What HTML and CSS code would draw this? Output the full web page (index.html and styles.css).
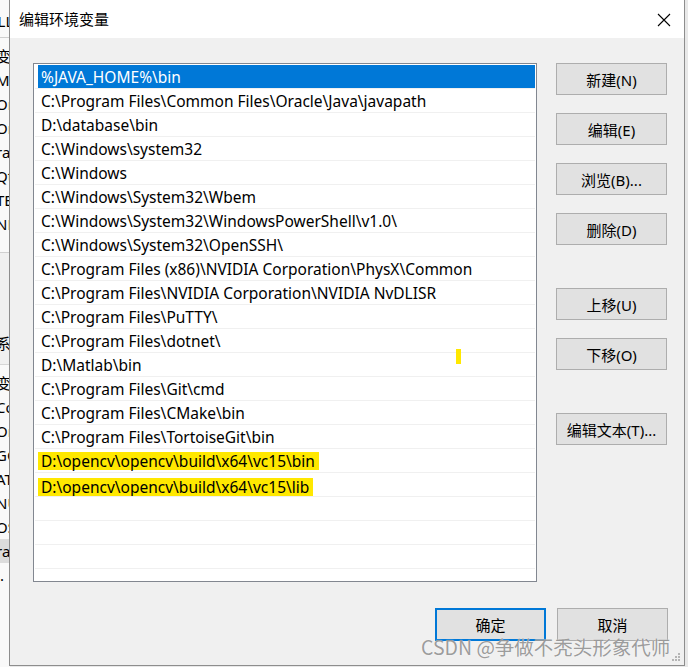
FILE: index.html
```html
<!DOCTYPE html>
<html lang="zh">
<head>
<meta charset="utf-8">
<title>编辑环境变量</title>
<link rel="stylesheet" href="styles.css">
</head>
<body>
<div class="desktop">
  <div class="bgwin">
    <div class="bg-top">
      <div class="bgl l1">ALL</div>
      <div class="bgl l2">变量</div>
      <div class="bgl">MY</div>
      <div class="bgl">Or</div>
      <div class="bgl">Or</div>
      <div class="bgl">ra</div>
      <div class="bgl">Qt</div>
      <div class="bgl">TE</div>
      <div class="bgl">NM</div>
    </div>
    <div class="bg-mid">
      <div class="bgl">系统</div>
    </div>
    <div class="bg-bot">
      <div class="bgl">变量</div>
      <div class="bgl">Co</div>
      <div class="bgl">Or</div>
      <div class="bgl">GO</div>
      <div class="bgl">AT</div>
      <div class="bgl">NU</div>
      <div class="bgl">OS</div>
      <div class="bgl sel">ra</div>
      <div class="bgl">..</div>
    </div>
  </div>

  <div class="dialog">
    <div class="titlebar">
      <span class="title">编辑环境变量</span>
      <svg class="close" width="14" height="14" viewBox="0 0 14 14"><path d="M1 1 L13 13 M13 1 L1 13" stroke="#000" stroke-width="1.1" fill="none"/></svg>
    </div>
    <div class="body">
      <div class="main">
        <div class="list">
          <div class="row"><span class="cell selected">%JAVA_HOME%\bin</span></div>
          <div class="row"><span class="cell">C:\Program Files\Common Files\Oracle\Java\javapath</span></div>
          <div class="row"><span class="cell">D:\database\bin</span></div>
          <div class="row"><span class="cell">C:\Windows\system32</span></div>
          <div class="row"><span class="cell">C:\Windows</span></div>
          <div class="row"><span class="cell">C:\Windows\System32\Wbem</span></div>
          <div class="row"><span class="cell">C:\Windows\System32\WindowsPowerShell\v1.0\</span></div>
          <div class="row"><span class="cell">C:\Windows\System32\OpenSSH\</span></div>
          <div class="row"><span class="cell">C:\Program Files (x86)\NVIDIA Corporation\PhysX\Common</span></div>
          <div class="row"><span class="cell">C:\Program Files\NVIDIA Corporation\NVIDIA NvDLISR</span></div>
          <div class="row"><span class="cell">C:\Program Files\PuTTY\</span></div>
          <div class="row"><span class="cell">C:\Program Files\dotnet\</span></div>
          <div class="row"><span class="cell">D:\Matlab\bin</span></div>
          <div class="row"><span class="cell">C:\Program Files\Git\cmd</span></div>
          <div class="row"><span class="cell">C:\Program Files\CMake\bin</span></div>
          <div class="row"><span class="cell">C:\Program Files\TortoiseGit\bin</span></div>
          <div class="row"><span class="cell"><span class="mark m1">D:\opencv\opencv\build\x64\vc15\bin</span></span></div>
          <div class="row"><span class="cell"><span class="mark m2">D:\opencv\opencv\build\x64\vc15\lib</span></span></div>
          <div class="row"><span class="cell"></span></div>
          <div class="row"><span class="cell"></span></div>
          <div class="row"><span class="cell"></span></div>
          <div class="row"><span class="cell"></span></div>
        </div>
        <div class="buttons">
          <button class="btn">新建(N)</button>
          <button class="btn">编辑(E)</button>
          <button class="btn">浏览(B)...</button>
          <button class="btn">删除(D)</button>
          <button class="btn gap">上移(U)</button>
          <button class="btn">下移(O)</button>
          <button class="btn gap">编辑文本(T)...</button>
        </div>
      </div>
      <div class="footer">
        <button class="btn default">确定</button>
        <button class="btn">取消</button>
      </div>
    </div>
    <div class="grip">
      <svg width="9" height="9" viewBox="0 0 9 9" fill="#b4b4b4">
        <rect x="6" y="0" width="2" height="2"/>
        <rect x="3" y="3" width="2" height="2"/><rect x="6" y="3" width="2" height="2"/>
        <rect x="0" y="6" width="2" height="2"/><rect x="3" y="6" width="2" height="2"/><rect x="6" y="6" width="2" height="2"/>
      </svg>
    </div>
  </div>

  <div class="annot"></div>
  <div class="watermark">CSDN @争做不秃头形象代师</div>
</div>
</body>
</html>
```

FILE: styles.css
```css
* { box-sizing: border-box; }
html, body {
  margin: 0;
  padding: 0;
  width: 688px;
  height: 667px;
  overflow: hidden;
  background: #f0f0f0;
  font-family: "Noto Sans", "Noto Sans CJK SC", sans-serif;
  font-size: 15px;
  color: #000;
}
.desktop {
  position: relative;
  width: 688px;
  height: 667px;
  background: #e8e8e8;
}

/* background window peeking out on the left */
.bgwin {
  position: absolute;
  left: 0;
  top: 0;
  width: 10px;
  height: 667px;
  overflow: hidden;
  background: #f7f7f7;
  display: flex;
  flex-direction: column;
}
.bgl {
  height: 24px;
  line-height: 24px;
  margin-left: -4px;
  white-space: nowrap;
  font-family: "Noto Sans", "Noto Sans CJK SC", sans-serif;
}
.bgl.l1 { margin-left: -12px; }
.bg-top { padding-top: 8px; border-bottom: 1px solid #d0d0d0; height: 253px; background: #f9f9f9; }
.bg-top .l1 { height: 30px; line-height: 26px; border-bottom: 1px solid #cfcfcf; margin-bottom: 6px; }
.bg-mid { padding-top: 78px; height: 112px; border-bottom: 1px solid #d6d6d6; background: #f0f0f0; }
.bg-bot { padding-top: 6px; background: #f9f9f9; flex: 1; }
.bgl.sel { background: #dcdcdc; }

/* dialog window */
.dialog {
  position: absolute;
  left: 9px;
  top: -1px;
  width: 676px;
  height: 667px;
  border: 1px solid #8d8d8d;
  background: #f0f0f0;
  display: flex;
  flex-direction: column;
}
.titlebar {
  height: 38px;
  background: #fff;
  display: flex;
  align-items: center;
  justify-content: space-between;
  padding: 0 13px 0 9px;
  flex: none;
}
.title {
  font-family: "Noto Sans CJK SC", sans-serif;
  font-size: 15px;
  margin-top: -2px;
}
.close { margin-top: 2px; }

.body {
  flex: 1;
  padding: 25px 16px 0 23px;
  display: flex;
  flex-direction: column;
}
.main {
  display: flex;
  gap: 19px;
}
.list {
  width: 504px;
  height: 519px;
  border: 1px solid #828790;
  background: #fff;
  padding: 1px;
  overflow: hidden;
}
.row {
  height: 24px;
  border-bottom: 1px solid #f0f0f0;
  padding-left: 3px;
  display: flex;
}
.cell {
  flex: 1;
  height: 23px;
  line-height: 24px;
  padding-left: 3px;
  white-space: nowrap;
  font-size: 15.5px;
  overflow: hidden;
}
.cell.selected {
  background: #0078d7;
  color: #fff;
}
.mark {
  display: inline-block;
  background: #ffe800;
  margin-left: -3px;
  padding: 0 4px 0 3px;
  line-height: 18px;
  vertical-align: top;
  margin-top: 3px;
}
.m2 { margin-top: 5px; line-height: 19px; }

.buttons {
  width: 111px;
  display: flex;
  flex-direction: column;
  gap: 18px;
}
.btn {
  width: 111px;
  height: 33px;
  background: #e1e1e1;
  border: 1px solid #adadad;
  font-family: "Noto Sans", "Noto Sans CJK SC", sans-serif;
  font-size: 15px;
  color: #000;
  padding: 0;
  margin: 0;
}
.buttons .btn { height: 32px; }
.buttons .btn.gap { margin-top: 25px; }
.btn.default {
  border: 2px solid #0078d7;
}
.footer {
  display: flex;
  justify-content: flex-end;
  gap: 11px;
  margin-top: 26px;
}

.grip {
  position: absolute;
  right: 3px;
  bottom: 3px;
  width: 9px;
  height: 9px;
  line-height: 0;
}

.annot {
  position: absolute;
  left: 456px;
  top: 349px;
  width: 5px;
  height: 15px;
  background: #ffe800;
}
.watermark {
  position: absolute;
  left: 421px;
  top: 633px;
  font-family: "Noto Sans CJK SC", sans-serif;
  font-size: 19.5px;
  line-height: 28px;
  color: rgba(130, 130, 130, 0.8);
  text-shadow: 0 0 1px rgba(255,255,255,0.9);
  white-space: nowrap;
}
```
